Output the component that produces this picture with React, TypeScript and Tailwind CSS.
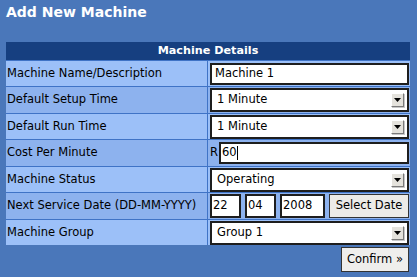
import React from "react";

const font = { fontFamily: '"DejaVu Sans", Verdana, sans-serif' };

function Arrow() {
  return (
    <div className="w-[13px] h-[14px] mr-[3px] bg-[#e4e2dc] border-t border-l border-t-white border-l-white border-b border-r border-b-[#7a7a7a] border-r-[#7a7a7a] shadow-[1px_1px_0_#c8c8c8] flex items-center justify-center">
      <svg width="7" height="4" viewBox="0 0 7 4">
        <path d="M0 0 H7 L3.5 4 Z" fill="#000" />
      </svg>
    </div>
  );
}

function Select({ text }: { text: string }) {
  return (
    <div className="flex items-center w-[199px] h-[24px] bg-white border-2 border-[#1e1e1e] box-border">
      <span className="flex-1 pl-[5px] leading-none">{text}</span>
      <Arrow />
    </div>
  );
}

function TextBox({ text, w, caret, pad }: { text: string; w: string; caret?: boolean; pad?: string }) {
  return (
    <div className={`flex items-center h-[22px] bg-white border-2 border-[#1e1e1e] box-border ${w}`}>
      <span className={`${pad ?? "pl-[3px]"} leading-none`}>{text}</span>
      {caret && <span className="w-px h-[14px] bg-black" />}
    </div>
  );
}

const rows: { label: string; h: string; light: boolean; value: React.ReactNode }[] = [
  { label: "Machine Name/Description", h: "h-[25px]", light: true, value: <TextBox text="Machine 1" w="w-[199px]" /> },
  { label: "Default Setup Time", h: "h-[26px]", light: false, value: <Select text="1 Minute" /> },
  { label: "Default Run Time", h: "h-[25px]", light: true, value: <Select text="1 Minute" /> },
  {
    label: "Cost Per Minute",
    h: "h-[26px]",
    light: false,
    value: (
      <div className="flex items-center">
        <span className="w-[9px] leading-none">R</span>
        <TextBox text="60" w="w-[190px]" caret pad="pl-[1px]" />
      </div>
    ),
  },
  { label: "Machine Status", h: "h-[25px]", light: true, value: <Select text="Operating" /> },
  {
    label: "Next Service Date (DD-MM-YYYY)",
    h: "h-[26px]",
    light: false,
    value: (
      <div className="flex items-center gap-[4px]">
        <TextBox text="22" w="w-[31px] h-[24px]" pad="pl-[1px]" />
        <TextBox text="04" w="w-[31px] h-[24px]" pad="pl-[1px]" />
        <TextBox text="2008" w="w-[45px] h-[24px]" pad="pl-[1px]" />
        <div className="w-[80px] h-[24px] flex items-center justify-center bg-[#ecebe8] border border-[#333] box-border leading-none">
          Select Date
        </div>
      </div>
    ),
  },
  { label: "Machine Group", h: "h-[25px]", light: true, value: <Select text="Group 1" /> },
];

export default function App() {
  return (
    <div className="w-[417px] h-[277px] bg-[#4a77ba] overflow-hidden text-[11.5px] text-black" style={font}>
      <div className="pl-[6px] pt-[3px] h-[21px] leading-[18px] text-[14px] font-bold text-white">Add New Machine</div>
      <div className="ml-[6px] mt-[21px] w-[404px] grid grid-cols-[201px_202px] gap-px bg-[#3f73c6]">
        <div className="col-span-2 h-[18px] bg-[#163f80] text-white font-bold text-[11.2px] flex items-center justify-center">
          Machine Details
        </div>
        {rows.map((r) => (
          <React.Fragment key={r.label}>
            <div className={`${r.h} ${r.light ? "bg-[#9cc0f8]" : "bg-[#8db2ee]"} flex items-center pl-[1px] whitespace-nowrap overflow-visible`}>
              {r.label}
            </div>
            <div className={`${r.h} ${r.light ? "bg-[#9cc0f8]" : "bg-[#8db2ee]"} flex items-center pl-[2px]`}>
              {r.value}
            </div>
          </React.Fragment>
        ))}
      </div>
      <div className="w-[409px] flex justify-end mt-[2px]">
        <div className="w-[68px] h-[25px] flex items-center justify-center bg-[#efeeec] border border-[#333] box-border leading-none">
          Confirm »
        </div>
      </div>
    </div>
  );
}
